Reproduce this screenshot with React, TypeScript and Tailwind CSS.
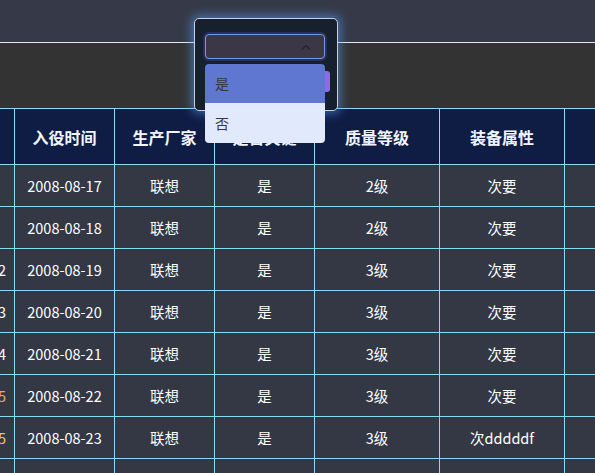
import React from "react";

interface Row {
  no: string;
  date: string;
  maker: string;
  flag: string;
  level: string;
  attr: string;
  tone: string;
}

const rows: Row[] = [
  { no: "", date: "2008-08-17", maker: "联想", flag: "是", level: "2级", attr: "次要", tone: "text-white" },
  { no: "", date: "2008-08-18", maker: "联想", flag: "是", level: "2级", attr: "次要", tone: "text-white" },
  { no: "2", date: "2008-08-19", maker: "联想", flag: "是", level: "3级", attr: "次要", tone: "text-white" },
  { no: "3", date: "2008-08-20", maker: "联想", flag: "是", level: "3级", attr: "次要", tone: "text-white" },
  { no: "4", date: "2008-08-21", maker: "联想", flag: "是", level: "3级", attr: "次要", tone: "text-white" },
  { no: "5", date: "2008-08-22", maker: "联想", flag: "是", level: "3级", attr: "次要", tone: "text-[#f0a060]" },
  { no: "5", date: "2008-08-23", maker: "联想", flag: "是", level: "3级", attr: "次dddddf", tone: "text-[#f0c060]" },
  { no: "", date: "", maker: "", flag: "", level: "", attr: "", tone: "text-white" },
];

const headers = ["", "入役时间", "生产厂家", "是否关键", "质量等级", "装备属性", ""];

const cell = "border border-[#86dcf2] text-center";

export default function App() {
  return (
    <div
      className="relative w-[595px] h-[473px] overflow-hidden bg-[#343844]"
      style={{ fontFamily: '"Noto Sans CJK SC", "Microsoft YaHei", sans-serif' }}
    >
      {/* top strip */}
      <div className="h-[43px] bg-[#363a48] border-b border-[#e6e8f0]" />
      <div className="h-[65px] bg-[#333333]" />

      {/* table, scrolled sideways */}
      <div className="w-[595px] overflow-hidden">
        <table className="table-fixed border-collapse -ml-[87px] w-[800px]">
          <colgroup>
            <col className="w-[101px]" />
            <col className="w-[100px]" />
            <col className="w-[100px]" />
            <col className="w-[100px]" />
            <col className="w-[125px]" />
            <col className="w-[125px]" />
            <col className="w-[149px]" />
          </colgroup>
          <thead>
            <tr className="h-[56px] bg-[#0f1d45]">
              {headers.map((h, i) => (
                <th key={i} className={`${cell} text-[16px] font-bold text-[#f2f5ff]`}>
                  {h}
                </th>
              ))}
            </tr>
          </thead>
          <tbody>
            {rows.map((r, i) => (
              <tr key={i} className="h-[42px] bg-[#343844] text-[14.5px] text-white">
                <td className={`${cell} !text-right pr-[8px] ${r.tone}`}>{r.no}</td>
                <td className={cell}>{r.date}</td>
                <td className={cell}>{r.maker}</td>
                <td className={cell}>{r.flag}</td>
                <td className={cell}>{r.level}</td>
                <td className={cell}>{r.attr}</td>
                <td className={cell} />
              </tr>
            ))}
          </tbody>
        </table>
      </div>

      {/* popup with open select */}
      <div className="absolute left-[194px] top-[18px] w-[144px] h-[93px] rounded-[5px] border border-[#c9cfe2] bg-[#17202d] shadow-[0_0_10px_3px_rgba(90,160,255,0.5)]" />
      <div className="absolute left-[325px] top-[71px] w-[5px] h-[21px] rounded-r-[3px] bg-[#8a6de8]" />
      <div className="absolute left-[205px] top-[34px] w-[120px] h-[25px] rounded-[4px] border border-[#7896ee] bg-[#3b3747] shadow-[0_0_0_2px_#27305c] flex items-center justify-end pr-[13px]">
        <svg width="10" height="6" viewBox="0 0 10 6" fill="none">
          <path d="M1 5.5 L5 1.5 L9 5.5" stroke="#23232b" strokeWidth="1.2" />
        </svg>
      </div>
      <div className="absolute left-[205px] top-[64px] w-[120px] rounded-[4px] overflow-hidden text-[14px] text-[#333844]">
        <div className="h-[39px] bg-[#5f77d1] flex items-center pl-[10px]">是</div>
        <div className="h-[40px] bg-[#e0eafc] flex items-center pl-[10px]">否</div>
      </div>
    </div>
  );
}
